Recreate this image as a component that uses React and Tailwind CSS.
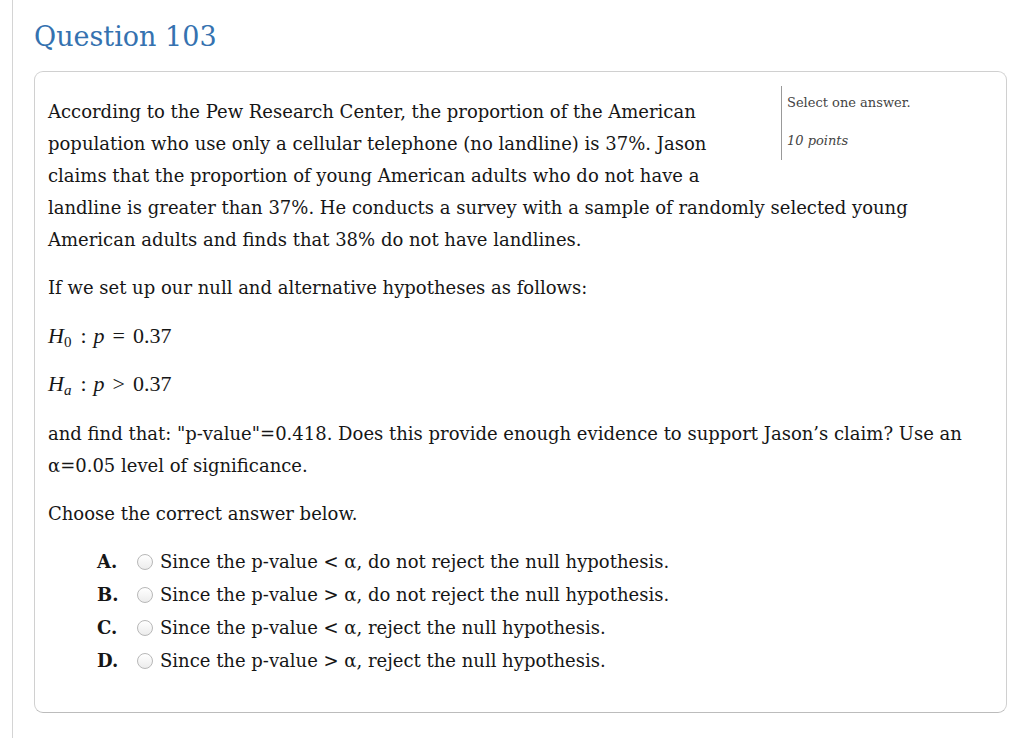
const serif = "font-['DejaVu_Serif',_'Liberation_Serif',_serif]"
const math = "font-['Liberation_Serif',_serif]"

const options = [
  ['A.', 'Since the p-value < α, do not reject the null hypothesis.'],
  ['B.', 'Since the p-value > α, do not reject the null hypothesis.'],
  ['C.', 'Since the p-value < α, reject the null hypothesis.'],
  ['D.', 'Since the p-value > α, reject the null hypothesis.'],
]

function Radio() {
  return (
    <span className="inline-block w-[16px] h-[16px] rounded-full border border-[#b8b8b8] bg-gradient-to-b from-white to-[#ececec] shrink-0" />
  )
}

export default function App() {
  return (
    <div className={`min-h-screen bg-white ${serif}`}>
      <div className="ml-[12px] border-l border-[#d4d4d4] min-h-[738px] pl-[21px] pr-[17px] pt-[17px]">
        {/* Title */}
        <h1 className="text-[27px] leading-[40px] text-[#3572b0] mb-[14px]">Question 103</h1>

        {/* Card */}
        <div className="border border-[#d0d0d0] border-b-[#bcbcbc] rounded-[9px] pl-[13px] pr-[15px] pt-[14px] pb-[35px] text-[#161616] text-[18px]">
          {/* answer info, text wraps around it */}
          <div className="float-right w-[210px] ml-[20px] mb-[14px] border-l border-[#999] pl-[5px] pt-[8px] pb-[10px] text-[#444]">
            <div className="text-[13px] leading-[18px]">Select one answer.</div>
            <div className="text-[13px] leading-[18px] italic mt-[20px]">10 points</div>
          </div>

          <p className="leading-[32px] mt-[10px]">
            According to the Pew Research Center, the proportion of the American population who use only a cellular
            telephone (no landline) is 37%. Jason claims that the proportion of young American adults who do not have a
            landline is greater than 37%. He conducts a survey with a sample of randomly selected young American adults
            and finds that 38% do not have landlines.
          </p>

          <p className="leading-[32px] mt-[16px]">If we set up our null and alternative hypotheses as follows:</p>

          <p className={`${math} text-[22px] leading-[32px] mt-[16px]`}>
            <i>H</i>
            <sub className="text-[15px]">0</sub>
            <span className="ml-[9px]">:</span>
            <i className="ml-[7px]">p</i>
            <span className="mx-[8px]">=</span>0.37
          </p>

          <p className={`${math} text-[22px] leading-[32px] mt-[16px]`}>
            <i>H</i>
            <sub className="text-[15px] italic">a</sub>
            <span className="ml-[9px]">:</span>
            <i className="ml-[7px]">p</i>
            <span className="mx-[8px]">&gt;</span>0.37
          </p>

          <p className="leading-[32px] mt-[18px]">
            and find that: "p-value"=0.418. Does this provide enough evidence to support Jason’s claim? Use an α=0.05
            level of significance.
          </p>

          <p className="leading-[32px] mt-[16px]">Choose the correct answer below.</p>

          <div className="mt-[15px] pl-[49px] flex flex-col">
            {options.map(([letter, text]) => (
              <div key={letter} className="flex items-center h-[33px]">
                <span className="font-bold w-[40px]">{letter}</span>
                <Radio />
                <span className="ml-[7px]">{text}</span>
              </div>
            ))}
          </div>
        </div>
      </div>
    </div>
  )
}
